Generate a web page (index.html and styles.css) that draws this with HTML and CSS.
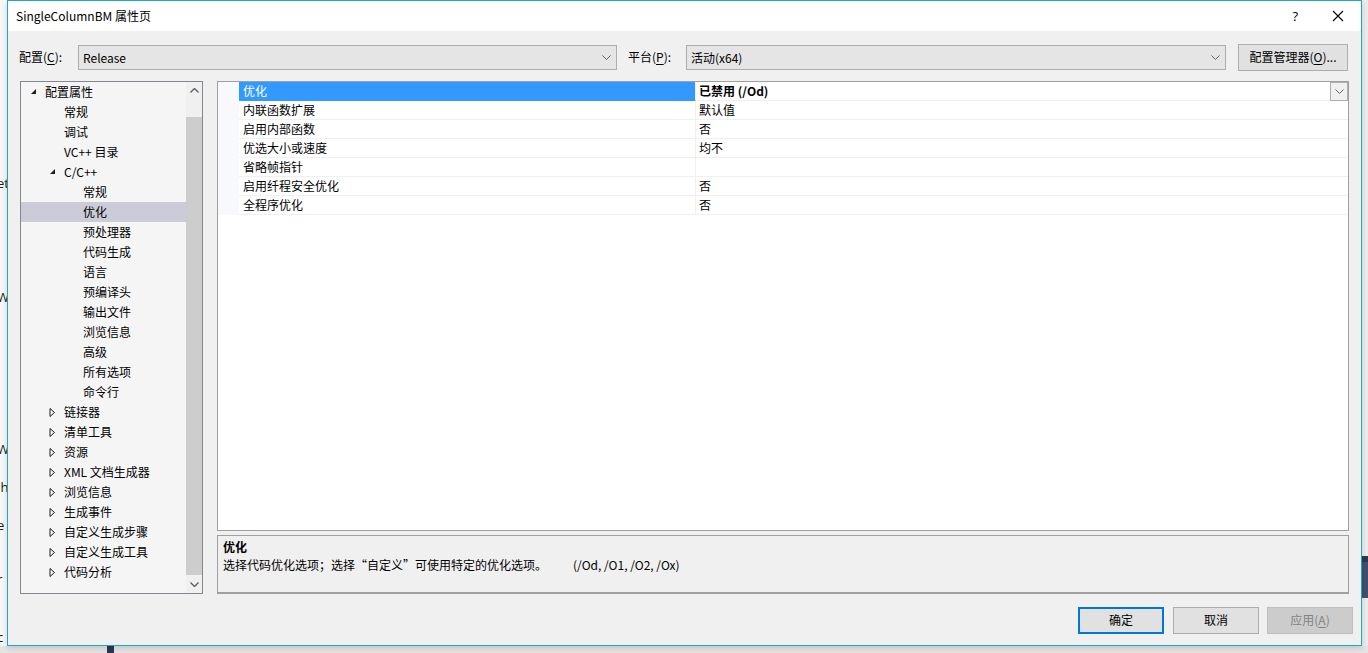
FILE: index.html
```html
<!DOCTYPE html>
<html lang="zh-CN">
<head>
<meta charset="utf-8">
<title>SingleColumnBM 属性页</title>
<link rel="stylesheet" href="styles.css">
</head>
<body>
<div class="desktop">
  <div class="bg-left">
    <span class="frag" style="top:176px">et</span>
    <span class="frag" style="top:290px">W</span>
    <span class="frag" style="top:442px">W</span>
    <span class="frag" style="top:480px">.h</span>
    <span class="frag" style="top:518px">e</span>
    <span class="frag" style="top:572px">r</span>
    <span class="frag" style="top:630px">c</span>
  </div>
  <div class="bg-right"><div class="navy"></div></div>
  <div class="bg-bottom"><div class="navy-bar"></div></div>

  <div class="dialog">
    <div class="titlebar">
      <span class="title">SingleColumnBM 属性页</span>
      <span class="help">?</span>
      <svg class="close" width="12" height="12" viewBox="0 0 12 12"><path d="M1 1 L11 11 M11 1 L1 11" stroke="#000" stroke-width="1.1" fill="none"/></svg>
    </div>
    <div class="body">
      <div class="toprow">
        <span class="lbl lbl-cfg">配置(<u>C</u>):</span>
        <div class="combo combo-cfg"><span>Release</span><svg class="chev" width="9" height="5" viewBox="0 0 9 5"><path d="M0.5 0.5 L4.5 4.5 L8.5 0.5" stroke="#606060" fill="none"/></svg></div>
        <span class="lbl lbl-plat">平台(<u>P</u>):</span>
        <div class="combo combo-plat"><span>活动(x64)</span><svg class="chev" width="9" height="5" viewBox="0 0 9 5"><path d="M0.5 0.5 L4.5 4.5 L8.5 0.5" stroke="#606060" fill="none"/></svg></div>
        <div class="btn btn-mgr">配置管理器(<u>O</u>)...</div>
      </div>

      <div class="main">
        <div class="tree">
          <div class="tree-list">
            <div class="ti l0"><svg class="tri" width="7" height="7" viewBox="0 0 7 7"><path d="M6 1 L6 6 L1 6 Z" fill="#1e1e1e"/></svg>配置属性</div>
            <div class="ti l1">常规</div>
            <div class="ti l1">调试</div>
            <div class="ti l1">VC++ 目录</div>
            <div class="ti l1"><svg class="tri" width="7" height="7" viewBox="0 0 7 7"><path d="M6 1 L6 6 L1 6 Z" fill="#1e1e1e"/></svg>C/C++</div>
            <div class="ti l2">常规</div>
            <div class="ti l2 sel">优化</div>
            <div class="ti l2">预处理器</div>
            <div class="ti l2">代码生成</div>
            <div class="ti l2">语言</div>
            <div class="ti l2">预编译头</div>
            <div class="ti l2">输出文件</div>
            <div class="ti l2">浏览信息</div>
            <div class="ti l2">高级</div>
            <div class="ti l2">所有选项</div>
            <div class="ti l2">命令行</div>
            <div class="ti l1"><svg class="tri" width="7" height="9" viewBox="0 0 7 9"><path d="M1 0.5 L5.5 4.5 L1 8.5 Z" stroke="#1e1e1e" fill="none"/></svg>链接器</div>
            <div class="ti l1"><svg class="tri" width="7" height="9" viewBox="0 0 7 9"><path d="M1 0.5 L5.5 4.5 L1 8.5 Z" stroke="#1e1e1e" fill="none"/></svg>清单工具</div>
            <div class="ti l1"><svg class="tri" width="7" height="9" viewBox="0 0 7 9"><path d="M1 0.5 L5.5 4.5 L1 8.5 Z" stroke="#1e1e1e" fill="none"/></svg>资源</div>
            <div class="ti l1"><svg class="tri" width="7" height="9" viewBox="0 0 7 9"><path d="M1 0.5 L5.5 4.5 L1 8.5 Z" stroke="#1e1e1e" fill="none"/></svg>XML 文档生成器</div>
            <div class="ti l1"><svg class="tri" width="7" height="9" viewBox="0 0 7 9"><path d="M1 0.5 L5.5 4.5 L1 8.5 Z" stroke="#1e1e1e" fill="none"/></svg>浏览信息</div>
            <div class="ti l1"><svg class="tri" width="7" height="9" viewBox="0 0 7 9"><path d="M1 0.5 L5.5 4.5 L1 8.5 Z" stroke="#1e1e1e" fill="none"/></svg>生成事件</div>
            <div class="ti l1"><svg class="tri" width="7" height="9" viewBox="0 0 7 9"><path d="M1 0.5 L5.5 4.5 L1 8.5 Z" stroke="#1e1e1e" fill="none"/></svg>自定义生成步骤</div>
            <div class="ti l1"><svg class="tri" width="7" height="9" viewBox="0 0 7 9"><path d="M1 0.5 L5.5 4.5 L1 8.5 Z" stroke="#1e1e1e" fill="none"/></svg>自定义生成工具</div>
            <div class="ti l1"><svg class="tri" width="7" height="9" viewBox="0 0 7 9"><path d="M1 0.5 L5.5 4.5 L1 8.5 Z" stroke="#1e1e1e" fill="none"/></svg>代码分析</div>
          </div>
          <div class="vscroll">
            <div class="sarrow"><svg width="9" height="5" viewBox="0 0 9 5"><path d="M0.5 4.5 L4.5 0.5 L8.5 4.5" stroke="#606060" stroke-width="1.4" fill="none"/></svg></div>
            <div class="strack"><div class="sthumb"></div></div>
            <div class="sarrow"><svg width="9" height="5" viewBox="0 0 9 5"><path d="M0.5 0.5 L4.5 4.5 L8.5 0.5" stroke="#606060" stroke-width="1.4" fill="none"/></svg></div>
          </div>
        </div>

        <div class="rightcol">
          <div class="grid">
            <div class="prow">
              <div class="gut"></div>
              <div class="pname hl">优化</div>
              <div class="pval bold">已禁用 (/Od)<div class="dd"><svg width="9" height="5" viewBox="0 0 9 5"><path d="M0.5 0.5 L4.5 4.5 L8.5 0.5" stroke="#606060" fill="none"/></svg></div></div>
            </div>
            <div class="prow"><div class="gut"></div><div class="pname">内联函数扩展</div><div class="pval">默认值</div></div>
            <div class="prow"><div class="gut"></div><div class="pname">启用内部函数</div><div class="pval">否</div></div>
            <div class="prow"><div class="gut"></div><div class="pname">优选大小或速度</div><div class="pval">均不</div></div>
            <div class="prow"><div class="gut"></div><div class="pname">省略帧指针</div><div class="pval"></div></div>
            <div class="prow"><div class="gut"></div><div class="pname">启用纤程安全优化</div><div class="pval">否</div></div>
            <div class="prow"><div class="gut"></div><div class="pname">全程序优化</div><div class="pval">否</div></div>
          </div>
          <div class="desc">
            <div class="desc-title">优化</div>
            <div class="desc-text"><span class="desc-main">选择代码优化选项；选择“自定义”可使用特定的优化选项。</span><span>(/Od, /O1, /O2, /Ox)</span></div>
          </div>
        </div>
      </div>

      <div class="footer">
        <div class="btn fbtn ok">确定</div>
        <div class="btn fbtn">取消</div>
        <div class="btn fbtn disabled">应用(<u>A</u>)</div>
      </div>
    </div>
  </div>
</div>
</body>
</html>
```

FILE: styles.css
```css
* { box-sizing: border-box; }
html, body { margin: 0; padding: 0; }
body {
  font-family: "Noto Sans CJK SC", "Noto Sans", sans-serif;
  font-size: 12px;
  color: #000;
}
.desktop {
  position: relative;
  width: 1368px;
  height: 653px;
  background: #e9e9e9;
  overflow: hidden;
}
.bg-left {
  position: absolute;
  left: 0; top: 0;
  width: 8px; height: 653px;
  background: #f7f7f7;
  overflow: hidden;
}
.frag {
  position: absolute;
  left: -3px;
  font-family: "Open Sans", sans-serif;
  font-size: 13px;
  line-height: 14px;
  color: #1a1a1a;
}
.bg-right {
  position: absolute;
  left: 1361px; top: 0;
  width: 7px; height: 653px;
  background: #ececec;
}
.navy {
  position: absolute;
  left: 0; top: 556px;
  width: 7px; height: 42px;
  background: #3f506e;
  border-top: 6px solid #2b3a57;
}
.bg-bottom {
  position: absolute;
  left: 0; top: 646px;
  width: 1368px; height: 7px;
  background: #e4e4e4;
}
.navy-bar {
  position: absolute;
  left: 107px; top: 0;
  width: 7px; height: 7px;
  background: #2a3853;
}

.dialog {
  position: absolute;
  left: 7px; top: 0;
  width: 1355px;
  height: 646px;
  border: 1px solid #1fa9b8;
  background: #f0f0f0;
  box-shadow: 0 2px 6px rgba(0,0,0,0.15);
  display: flex;
  flex-direction: column;
}
.titlebar {
  height: 30px;
  background: #fff;
  display: flex;
  align-items: center;
  flex: none;
  padding-bottom: 1px;
}
.title {
  margin-left: 8px;
  font-size: 12px;
  flex: 1;
}
.help {
  font-family: "Open Sans", sans-serif;
  font-size: 13px;
  margin-right: 34px;
}
.close {
  margin-right: 17px;
}

.body {
  flex: 1;
  display: flex;
  flex-direction: column;
  padding: 13px 0 0 12px;
}
.toprow {
  display: flex;
  align-items: center;
  height: 27px;
}
.lbl { line-height: 16px; padding-bottom: 2px; }
.lbl-cfg { margin-left: -1px; width: 59px; }
.lbl-plat { margin-left: 11px; width: 58px; }
u { text-decoration: underline; text-underline-offset: 2px; }
.combo {
  height: 25px;
  background: #e5e5e5;
  border: 1px solid #adadad;
  display: flex;
  align-items: center;
  padding-left: 4px;
  padding-right: 5px;
  padding-bottom: 1px;
  justify-content: space-between;
}
.combo-cfg { width: 539px; }
.combo-plat { width: 540px; }
.btn {
  height: 27px;
  background: #e1e1e1;
  border: 1px solid #adadad;
  display: flex;
  align-items: center;
  justify-content: center;
  padding-bottom: 2px;
}
.btn-mgr { width: 110px; margin-left: 12px; }

.main {
  display: flex;
  margin-top: 10px;
  height: 513px;
}
.tree {
  width: 183px;
  height: 513px;
  border: 1px solid #828790;
  background: #f5f5f5;
  display: flex;
}
.tree-list {
  width: 165px;
}
.ti {
  height: 20px;
  display: flex;
  align-items: center;
  position: relative;
  white-space: nowrap;
  padding-bottom: 2px;
}
.ti.l0 { padding-left: 24px; }
.ti.l1 { padding-left: 43px; }
.ti.l2 { padding-left: 62px; }
.ti .tri { position: absolute; top: 6px; }
.ti.l0 .tri { left: 9px; }
.ti.l1 .tri { left: 28px; }
.ti.sel { background: #cbccd8; }
.vscroll {
  width: 16px;
  display: flex;
  flex-direction: column;
  background: #f0f0f0;
}
.sarrow {
  height: 17px;
  display: flex;
  align-items: center;
  justify-content: center;
}
.strack {
  flex: 1;
  display: flex;
  flex-direction: column;
}
.sthumb {
  margin-top: 18px;
  height: 458px;
  background: #cdcdcd;
}

.rightcol {
  margin-left: 14px;
  width: 1132px;
  display: flex;
  flex-direction: column;
  gap: 4px;
}
.grid {
  height: 450px;
  background: #fff;
  border: 1px solid #a0a0a0;
}
.prow {
  display: flex;
  height: 19px;
}
.gut {
  width: 21px;
  background: #f7f9fc;
}
.pname {
  width: 457px;
  padding-left: 4px;
  padding-bottom: 2px;
  display: flex;
  align-items: center;
  border-bottom: 1px solid #f0f0f0;
  border-right: 1px solid #f0f0f0;
}
.pname.hl {
  background: #3399ff;
  color: #fff;
  border-bottom-color: #3399ff;
}
.pval {
  flex: 1;
  padding-left: 3px;
  padding-bottom: 2px;
  display: flex;
  align-items: center;
  border-bottom: 1px solid #f0f0f0;
  position: relative;
}
.bold { font-weight: bold; }
.dd {
  position: absolute;
  right: 0; top: 0;
  width: 18px; height: 19px;
  background: #f0f0f0;
  border: 1px solid #adadad;
  display: flex;
  align-items: center;
  justify-content: center;
}
.desc {
  height: 59px;
  background: #f0f0f0;
  border: 1px solid #a0a0a0;
  border-bottom: 2px solid #a0a0a0;
  padding: 2px 0 0 5px;
}
.desc-title {
  font-weight: bold;
  line-height: 18px;
}
.desc-text {
  line-height: 18px;
  display: flex;
}
.desc-main { width: 350px; }

.footer {
  display: flex;
  justify-content: flex-end;
  margin-top: 13px;
  padding-right: 8px;
  gap: 9px;
}
.fbtn { width: 86px; }
.fbtn + .fbtn + .fbtn { margin-left: -1px; }
.fbtn.ok { border: 2px solid #0078d7; }
.fbtn.disabled {
  background: #cccccc;
  border-color: #bfbfbf;
  color: #838383;
}
```
